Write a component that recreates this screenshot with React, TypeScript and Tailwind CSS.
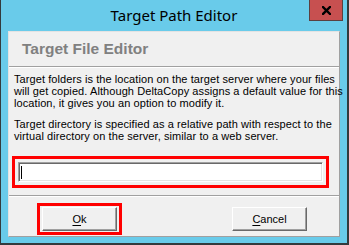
import React from "react";

const ui = { fontFamily: '"Liberation Sans", Arial, sans-serif' };

function EtchedLine() {
	return (
		<div>
			<div className="h-px bg-[#a0a0a0]" />
			<div className="h-px bg-white" />
		</div>
	);
}

function DialogButton({ label, hot }: { label: string; hot: string }) {
	const rest = label.slice(hot.length);
	return (
		<button
			className="flex h-[24px] w-[75px] items-center justify-center border-t border-l border-b border-r border-t-white border-l-white border-b-[#696969] border-r-[#696969] bg-[#f0f0f0] text-[11px] text-black shadow-[inset_-1px_-1px_0_#a0a0a0]"
			style={ui}
		>
			<span>
				<span className="underline underline-offset-2">{hot}</span>
				{rest}
			</span>
		</button>
	);
}

export default function App() {
	return (
		<div className="flex h-[245px] w-[349px] flex-col border-l border-r-2 border-b-2 border-[#333a3d] bg-[#69cbea]">
			<div className="relative flex h-[31px] shrink-0 items-center justify-center">
				<span className="pb-[1px] text-[15px] text-black" style={{ fontFamily: '"Noto Sans", "Open Sans", sans-serif' }}>
					Target Path Editor
				</span>
				<div className="absolute top-0 right-[4px] flex h-[21px] w-[34px] items-center justify-center border border-t-0 border-[#5a4040] bg-[#c75050]">
					<svg width="9" height="9" viewBox="0 0 9 9">
						<path d="M1 1 L8 8 M8 1 L1 8" stroke="#000" strokeWidth="2.4" strokeLinecap="square" />
					</svg>
				</div>
			</div>

			<div className="mx-[7px] flex h-[206px] flex-col border border-t-[#e3e3e3] border-l-[#e3e3e3] border-b-[#a0a0a0] border-r-[#a0a0a0] bg-[#f0f0f0]">
				<div className="flex h-[34px] items-center pl-[13px]">
					<span className="text-[15.5px] font-bold text-[#808080]" style={ui}>
						Target File Editor
					</span>
				</div>
				<EtchedLine />

				<div className="flex h-[127px] flex-col pt-[5px] pl-[3px]">
					<div className="whitespace-nowrap pl-[2px] text-[11px] leading-[12px] tracking-[0.08px] text-black" style={ui}>
						<p>
							Target folders is the location on the target server where your files
							<br />
							will get copied. Although DeltaCopy assigns a default value for this
							<br />
							location, it gives you an option to modify it.
						</p>
						<p className="mt-[9px]">
							Target directory is specified as a relative path with respect to the
							<br />
							virtual directory on the server, similar to a web server.
						</p>
					</div>
					<div className="mt-[14px] w-[317px] border-[3px] border-[#ff0000] p-[3px]">
						<div className="flex h-[20px] items-center border border-t-[#a0a0a0] border-l-[#a0a0a0] border-b-white border-r-white bg-white pl-[2px] shadow-[inset_1px_1px_0_#696969,inset_-1px_-1px_0_#e3e3e3]">
							<span className="h-[13px] w-px bg-black" />
						</div>
					</div>
				</div>
				<EtchedLine />

				<div className="flex flex-1 items-start justify-between pt-[6px] pr-[32px] pl-[28px]">
					<div className="border-[3px] border-[#ff0000] px-[2px] py-[1px]">
						<DialogButton label="Ok" hot="O" />
					</div>
					<div className="mt-[4px]">
						<DialogButton label="Cancel" hot="C" />
					</div>
				</div>
			</div>
		</div>
	);
}
